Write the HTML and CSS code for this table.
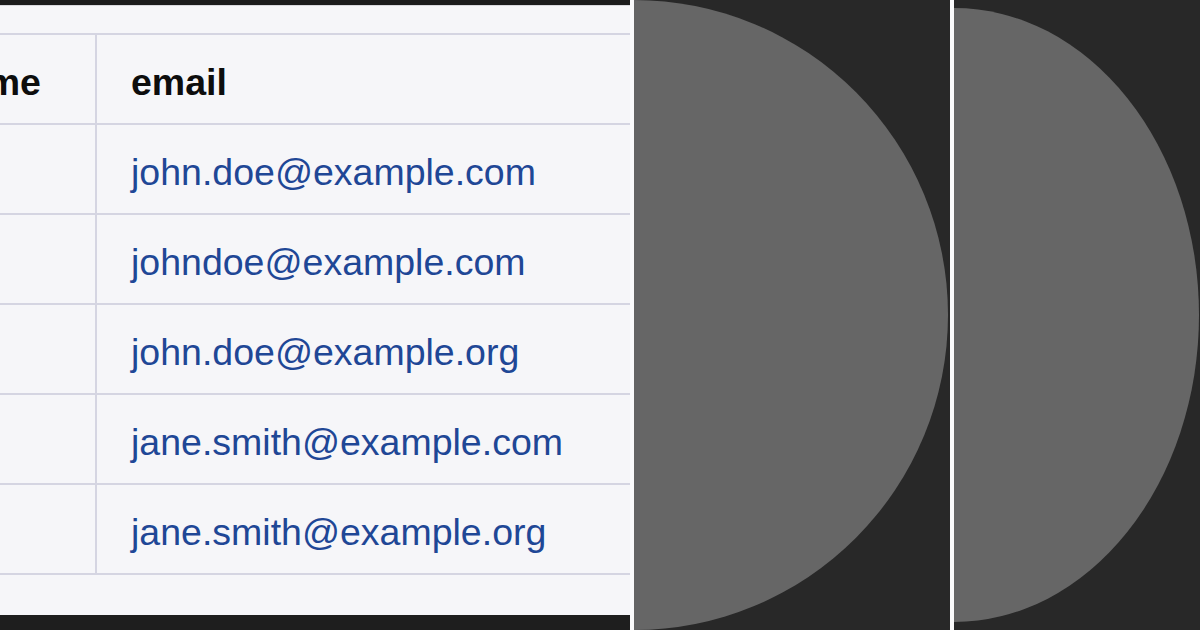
FILE: index.html
```html
<!DOCTYPE html>
<html lang="en">

<head>
    <meta charset="UTF-8">
    <meta name="viewport" content="width=device-width, initial-scale=1.0">
    <title>Users</title>
    <link rel="stylesheet" href="styles.css">
</head>

<body>
    <!-- Table panel -->
    <div class="sheet">
        <table class="users">
            <thead>
                <tr>
                    <th class="col-name">name</th>
                    <th class="col-email">email</th>
                </tr>
            </thead>
            <tbody>
                <tr>
                    <td></td>
                    <td><a href="#">john.doe@example.com</a></td>
                </tr>
                <tr>
                    <td></td>
                    <td><a href="#">johndoe@example.com</a></td>
                </tr>
                <tr>
                    <td></td>
                    <td><a href="#">john.doe@example.org</a></td>
                </tr>
                <tr>
                    <td></td>
                    <td><a href="#">jane.smith@example.com</a></td>
                </tr>
                <tr>
                    <td></td>
                    <td><a href="#">jane.smith@example.org</a></td>
                </tr>
            </tbody>
        </table>
    </div>

    <!-- Shape panels -->
    <div class="panel panel-wide">
        <div class="half"></div>
    </div>
    <div class="panel panel-narrow">
        <div class="half"></div>
    </div>
</body>

</html>
```

FILE: styles.css
```css
body {
    margin: 0;
    height: 630px;
    overflow: hidden;
    background-color: #fbfbfc;
    display: flex;
    gap: 4px;
    font-family: "Liberation Sans", Arial, sans-serif;
}

.sheet {
    width: 630px;
    flex: none;
    box-sizing: border-box;
    height: 630px;
    background-color: #f6f6f9;
    border-top: 5px solid #1c1c1c;
    border-bottom: 15px solid #1e1e1e;
    box-shadow: inset 0 1px 0 #d9d9de;
    padding-top: 28px;
    overflow: hidden;
}

.users {
    border-collapse: collapse;
    table-layout: fixed;
    width: 900px;
    margin-left: -93px;
    font-size: 37.5px;
    line-height: 42px;
}

.users th,
.users td {
    border: 2px solid #d5d5e2;
    padding: 26px 34px 20px;
    text-align: left;
    white-space: nowrap;
}

.users th {
    color: #0d0d0d;
    font-weight: bold;
}

.col-name {
    width: 118px;
}

.users a {
    color: #1f4796;
    text-decoration: none;
}

.panel {
    height: 630px;
    background-color: #282828;
    overflow: hidden;
}

.panel-wide {
    width: 316px;
    flex: none;
}

.panel-narrow {
    flex: 1;
    display: flex;
    align-items: center;
}

.half {
    background-color: #666666;
    border-radius: 0 100% 100% 0 / 0 50% 50% 0;
}

.panel-wide .half {
    width: 314px;
    height: 630px;
}

.panel-narrow .half {
    width: 245px;
    height: 614px;
}
```
